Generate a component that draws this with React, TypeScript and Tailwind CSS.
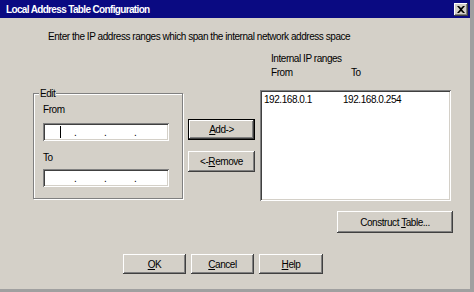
const raised =
  "shadow-[inset_-1px_-1px_#404040,inset_1px_1px_#ffffff,inset_-2px_-2px_#808080,inset_2px_2px_#d4d0c8]";
const sunken =
  "shadow-[inset_1px_1px_#808080,inset_-1px_-1px_#ffffff,inset_2px_2px_#404040,inset_-2px_-2px_#d4d0c8]";

function Btn({
  children,
  className = "",
  isDefault = false,
}: {
  children: React.ReactNode;
  className?: string;
  isDefault?: boolean;
}) {
  if (isDefault) {
    return (
      <div className={`border border-black bg-[#d4d0c8] ${className}`}>
        <div className={`flex h-full items-center justify-center ${raised}`}>{children}</div>
      </div>
    );
  }
  return (
    <div className={`flex items-center justify-center bg-[#d4d0c8] ${raised} ${className}`}>
      {children}
    </div>
  );
}

function IpField({ caret = false }: { caret?: boolean }) {
  return (
    <div className={`relative flex h-[18px] w-[126px] items-center bg-white pl-[3px] ${sunken}`}>
      {[0, 1, 2].map((i) => (
        <div key={i} className="flex items-center">
          <span className="flex w-[28px] justify-center">
            {caret && i === 0 ? <span className="block h-[12px] w-px bg-black" /> : null}
          </span>
          <span className="w-[2px]">.</span>
        </div>
      ))}
      <span className="w-[28px]" />
    </div>
  );
}

export default function App() {
  return (
    <div
      className="h-[292px] w-[474px] bg-[#a0a0a0] text-[10px] leading-[13px] tracking-[-0.45px] text-black"
      style={{ fontFamily: '"Liberation Sans", Arial, sans-serif' }}
    >
      <div className="flex h-[289px] w-[470px] flex-col bg-[#d4d0c8]">
        {/* title bar */}
        <div className="flex h-[18px] items-center justify-between bg-[#0a0a82] pl-[6px] pr-[2px]">
          <span className="text-[10px] font-bold tracking-[-0.65px] text-white">
            Local Address Table Configuration
          </span>
          <div className={`flex h-[13px] w-[14px] items-center justify-center bg-[#d4d0c8] ${raised}`}>
            <svg width="8" height="7" viewBox="0 0 8 7">
              <path d="M0 0h2l2 2 2-2h2L5 3.5 8 7H6L4 5 2 7H0l3-3.5z" fill="#000" />
            </svg>
          </div>
        </div>

        <p className="ml-[48px] mt-[12px]">
          Enter the IP address ranges which span the internal network address space
        </p>

        <div className="flex">
          {/* edit group */}
          <div className="ml-[33px] mt-[50px] w-[150px]">
            <div className="relative h-[106px] border border-[#808080] shadow-[1px_1px_#ffffff,inset_1px_1px_#ffffff]">
              <span className="absolute -top-[7px] left-[5px] bg-[#d4d0c8] px-px">Edit</span>
              <div className="flex flex-col pl-[9px] pt-[9px]">
                <span>From</span>
                <div className="mt-[7px]">
                  <IpField caret />
                </div>
                <span className="mt-[10px]">To</span>
                <div className="mt-[5px]">
                  <IpField />
                </div>
              </div>
            </div>
          </div>

          {/* add / remove */}
          <div className="ml-[5px] mt-[76px] flex w-[67px] flex-col">
            <Btn isDefault className="h-[21px]">
              <span>
                <span className="underline">A</span>dd-&gt;
              </span>
            </Btn>
            <Btn className="mt-[11px] h-[21px]">
              <span>
                &lt;-<span className="underline">R</span>emove
              </span>
            </Btn>
          </div>

          {/* ranges list */}
          <div className="ml-[5px] flex w-[193px] flex-col">
            <span className="ml-[11px] mt-[9px]">Internal IP ranges</span>
            <div className="mt-px flex">
              <span className="ml-[11px] w-[80px]">From</span>
              <span>To</span>
            </div>
            <div className={`mt-[11px] h-[111px] w-[191px] bg-white px-[4px] pt-[3px] ${sunken}`}>
              <div className="flex">
                <span className="w-[79px]">192.168.0.1</span>
                <span>192.168.0.254</span>
              </div>
            </div>
            <Btn className="ml-auto mt-[10px] h-[22px] w-[116px]">
              <span>
                Construct <span className="underline">T</span>able...
              </span>
            </Btn>
          </div>
        </div>

        {/* dialog buttons */}
        <div className="ml-[123px] mt-[21px] flex gap-[5px]">
          <Btn className="h-[20px] w-[63px]">
            <span>
              <span className="underline">O</span>K
            </span>
          </Btn>
          <Btn className="h-[20px] w-[63px]">
            <span>
              <span className="underline">C</span>ancel
            </span>
          </Btn>
          <Btn className="h-[20px] w-[64px]">
            <span>
              <span className="underline">H</span>elp
            </span>
          </Btn>
        </div>
      </div>
    </div>
  );
}
